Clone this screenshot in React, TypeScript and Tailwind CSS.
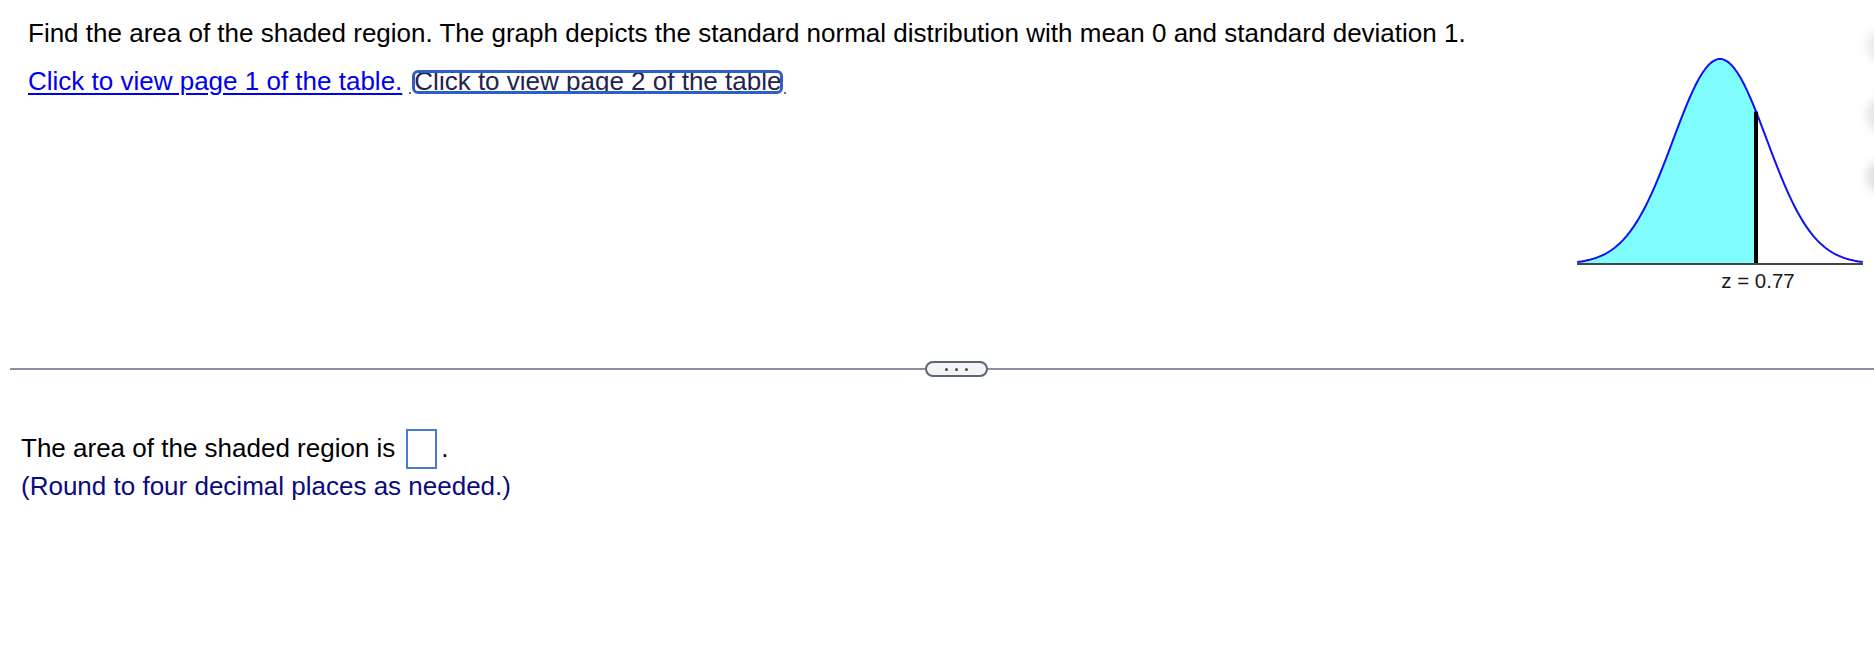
import React from "react";

function Graph() {
  const cx = 150;
  const s = 46.8;
  const base = 224;
  const amp = 205;
  const fy = (z: number) => base - amp * Math.exp((-z * z) / 2);
  const fx = (z: number) => cx + s * z;
  const N = 200;
  const z0 = -3.05;
  const z1 = 3.05;
  const zc = 0.77;
  let curve = "";
  for (let i = 0; i <= N; i++) {
    const z = z0 + ((z1 - z0) * i) / N;
    curve += `${i === 0 ? "M" : "L"}${fx(z).toFixed(2)},${fy(z).toFixed(2)} `;
  }
  let fill = "";
  for (let i = 0; i <= N; i++) {
    const z = z0 + ((zc - z0) * i) / N;
    fill += `${i === 0 ? "M" : "L"}${fx(z).toFixed(2)},${fy(z).toFixed(2)} `;
  }
  fill += `L${fx(zc).toFixed(2)},${base} L${fx(z0).toFixed(2)},${base} Z`;
  return (
    <svg width="300" height="260" viewBox="0 0 300 260">
      <path d={fill} fill="#7ffdfe" />
      <path d={curve} fill="none" stroke="#1010f0" strokeWidth="2" />
      <rect x="184" y={fy(zc)} width="4" height={base - fy(zc)} fill="#000" />
      <line x1="7" y1={base} x2="293" y2={base} stroke="#454545" strokeWidth="2" />
      <text
        x="188"
        y="248"
        textAnchor="middle"
        fontSize="20.5"
        fill="#1a1a1a"
        fontFamily="'Liberation Sans', Arial, sans-serif"
      >
        z = 0.77
      </text>
    </svg>
  );
}

export default function App() {
  return (
    <div className="relative w-[1874px] h-[662px] bg-white overflow-hidden font-['Liberation_Sans',Arial,sans-serif]">
      {/* right edge faint shadows */}
      <div className="absolute left-[1866px] top-[30px] w-[40px] h-[32px] rounded-full bg-[#ececec] blur-[4px]" />
      <div className="absolute left-[1866px] top-[97px] w-[40px] h-[36px] rounded-full bg-[#e6e6e6] blur-[4px]" />
      <div className="absolute left-[1866px] top-[160px] w-[40px] h-[33px] rounded-full bg-[#e2e2e2] blur-[4px]" />

      {/* top section */}
      <div className="flex justify-between h-[361px] pr-[4px]">
        <div className="pl-[28px] pt-[18px]">
          <div className="text-[26px] leading-[30px] text-black whitespace-nowrap">
            Find the area of the shaded region. The graph depicts the standard normal distribution with mean 0 and standard deviation 1.
          </div>
          <div className="mt-[18px] flex items-start h-[30px] whitespace-nowrap">
            <a className="text-[26px] leading-[30px] text-[#0000ee] underline underline-offset-[3px] cursor-pointer">
              Click to view page 1 of the table.
            </a>
            <span className="mt-[26px] ml-[7px] w-[2px] h-[2px] bg-[#6a6a8a]" />
            <a className="ml-[1px] mt-[4px] block h-[24px] w-[371px] border-[3px] border-[#2f5fc6] rounded-[6px] overflow-hidden text-[26px] leading-[16px] text-[#22244e] cursor-pointer">
              <span className="block -ml-[1px]">Click to view page 2 of the table.</span>
            </a>
            <span className="mt-[26px] ml-[1px] w-[2px] h-[2px] bg-[#6a6a8a]" />
          </div>
        </div>
        <div className="mt-[40px] w-[300px] h-[260px] shrink-0">
          <Graph />
        </div>
      </div>

      {/* divider */}
      <div className="flex items-center h-[16px] pl-[10px]">
        <div className="w-[915px] h-[2px] bg-[#8b909f]" />
        <button className="w-[63px] h-[16px] shrink-0 rounded-full border-[2px] border-[#5a6575] bg-[#f2f4f6] flex items-center justify-center gap-[7px]">
          <span className="w-[3px] h-[3px] rounded-full bg-[#474c58]" />
          <span className="w-[3px] h-[3px] rounded-full bg-[#474c58]" />
          <span className="w-[3px] h-[3px] rounded-full bg-[#474c58]" />
        </button>
        <div className="flex-1 h-[2px] bg-[#8b909f]" />
      </div>

      {/* answer section */}
      <div className="pl-[21px] mt-[52px]">
        <div className="flex items-start">
          <span className="mt-[4px] text-[26px] leading-[30px] text-black whitespace-nowrap">
            The area of the shaded region is
          </span>
          <span className="ml-[11px] w-[31px] h-[40px] border-[2px] border-[#4a7bd0] bg-white" />
          <span className="mt-[4px] ml-[4px] text-[26px] leading-[30px] text-black">.</span>
        </div>
        <div className="mt-[2px] text-[26px] leading-[30px] text-[#0a0a80] whitespace-nowrap">
          (Round to four decimal places as needed.)
        </div>
      </div>
    </div>
  );
}
